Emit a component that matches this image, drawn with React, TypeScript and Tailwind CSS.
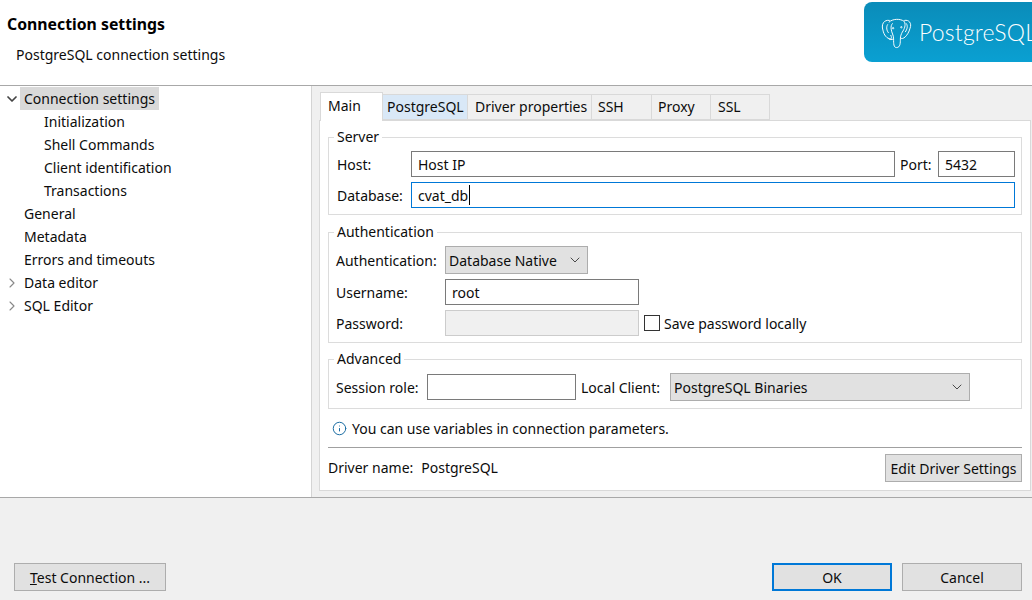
import { ChevronDown, ChevronRight, Info } from 'lucide-react';

const tabs = [
  { label: 'PostgreSQL', box: 'w-[85px] pl-[4px] bg-[#d9e8f7]' },
  { label: 'Driver properties', box: 'w-[124px] pl-[7px] bg-[#f0f0f0]' },
  { label: 'SSH', box: 'w-[60px] pl-[6px] bg-[#f0f0f0]' },
  { label: 'Proxy', box: 'w-[59px] pl-[6px] bg-[#f0f0f0]' },
  { label: 'SSL', box: 'w-[59px] pl-[7px] bg-[#f0f0f0]' },
];

function TreeRow({ label, depth = 0, arrow, selected }: { label: string; depth?: number; arrow?: 'open' | 'closed'; selected?: boolean }) {
  return (
    <div className="flex h-[23px] items-center">
      <div className="flex w-[20px] shrink-0 items-center justify-center pl-[4px]">
        {arrow === 'open' && <ChevronDown size={18} strokeWidth={2.6} className="text-[#444]" />}
        {arrow === 'closed' && <ChevronRight size={18} strokeWidth={1.6} className="text-[#888]" />}
      </div>
      <div className={`flex h-[23px] items-center pr-[4px] ${depth ? 'pl-[24px]' : 'pl-[4px]'} ${selected ? 'bg-[#d9d9d9]' : ''}`}>
        {label}
      </div>
    </div>
  );
}

function Group({ title, className, children }: { title: string; className: string; children: React.ReactNode }) {
  return (
    <fieldset className={`mx-[8px] border border-[#dcdcdc] ${className}`}>
      <legend className="ml-[5px] h-[18px] px-[3px] leading-[18px]">{title}</legend>
      {children}
    </fieldset>
  );
}

function Label({ children, className }: { children: React.ReactNode; className?: string }) {
  return <span className={`pt-[2px] ${className ?? ''}`}>{children}</span>;
}

function Field({ value, className, caret }: { value?: string; className: string; caret?: boolean }) {
  return (
    <div className={`flex h-[26px] shrink-0 items-center border pl-[6px] pt-[2px] ${className}`}>
      {value}
      {caret && <span className="mb-[2px] ml-[1px] h-[20px] w-px bg-black" />}
    </div>
  );
}

function Combo({ value, className }: { value: string; className: string }) {
  return (
    <div className={`flex h-[28px] shrink-0 items-center justify-between border border-[#adadad] bg-[#e1e1e1] pl-[3px] pr-[4px] ${className}`}>
      <Label>{value}</Label>
      <ChevronDown size={16} strokeWidth={1.2} className="text-[#222]" />
    </div>
  );
}

function Button({ children, className }: { children: React.ReactNode; className: string }) {
  return (
    <div className={`flex h-[28px] items-center justify-center bg-[#e1e1e1] pt-[2px] ${className}`}>
      <span>{children}</span>
    </div>
  );
}

function PostgresLogo() {
  return (
    <div className="flex h-[60px] w-[168px] items-center overflow-hidden rounded-l-[8px] bg-gradient-to-b from-[#0a8cb9] to-[#0aa0d2] pl-[17px] text-white">
      <svg width="31" height="32" viewBox="0 0 32 32" fill="none" stroke="white" strokeWidth="1" className="mt-[3px] shrink-0">
        <path d="M9 2C3 1 0 6 2 12C3 17 6 21 10 21C11 21 11 19 10 17" />
        <path d="M8 4C12 0 20 0 24 3C26 7 24 11 22 14C21 16 20 18 20 21C20 25 20 30 16 30C13 30 13 26 13 21C13 17 11 15 10.500 11C10 8 11 6 12 5" />
        <path d="M24 2C29 1 32 5 30 10C29 14 27 17 25 19C23 21 21 21 20 20" />
        <path d="M7 6C5 9 6 13 8 15" />
        <path d="M13 21C11 22 9 22 8 21" />
        <path d="M26 5C28 8 27 11 25 14" />
        <circle cx="12.500" cy="10" r="0.700" />
        <circle cx="21" cy="9" r="0.700" />
      </svg>
      <span className="ml-[7px] whitespace-nowrap font-['Lato',sans-serif] text-[23px] font-light tracking-[0.2px]">PostgreSQL</span>
    </div>
  );
}

export default function App() {
  return (
    <div className="flex h-[600px] w-[1032px] flex-col overflow-hidden bg-[#f0f0f0] font-['Noto_Sans',sans-serif] text-[14px] leading-[20px] text-[#0c0c0c]">
      {/* Header */}
      <div className="flex h-[86px] shrink-0 justify-between border-b border-[#a8a8a8] bg-white pt-[2px]">
        <div className="pl-[7px] pt-[12px]">
          <div className="text-[15.800px] font-bold leading-[20px] text-black">Connection settings</div>
          <div className="pl-[9px] pt-[11px]">PostgreSQL connection settings</div>
        </div>
        <PostgresLogo />
      </div>

      {/* Body */}
      <div className="flex h-[412px] shrink-0 border-b border-[#a8a8a8]">
        <div className="w-[312px] shrink-0 border-r border-[#d4d4d4] bg-white pt-px">
          <TreeRow label="Connection settings" arrow="open" selected />
          <TreeRow label="Initialization" depth={1} />
          <TreeRow label="Shell Commands" depth={1} />
          <TreeRow label="Client identification" depth={1} />
          <TreeRow label="Transactions" depth={1} />
          <TreeRow label="General" />
          <TreeRow label="Metadata" />
          <TreeRow label="Errors and timeouts" />
          <TreeRow label="Data editor" arrow="closed" />
          <TreeRow label="SQL Editor" arrow="closed" />
        </div>

        <div className="flex-1 pl-[7px] pr-[1px] pt-[6px]">
          {/* Tabs */}
          <div className="relative z-10 flex h-[28px] items-end">
            <div className="-mb-px ml-px flex h-[29px] w-[63px] items-center border border-b-0 border-[#d9d9d9] bg-white pb-[2px] pl-[7px]">Main</div>
            {tabs.map((tab) => (
              <div key={tab.label} className={`flex h-[26px] items-center border border-l-0 border-[#d9d9d9] ${tab.box}`}>
                {tab.label}
              </div>
            ))}
          </div>

          {/* Main tab */}
          <div className="h-[371px] border border-[#d9d9d9] bg-white">
            <Group title="Server" className="mt-[7px] h-[87px]">
              <div className="flex items-center pl-[8px] pt-[5px]">
                <Label className="w-[74px]">Host:</Label>
                <Field value="Host IP" className="w-[484px] border-[#7a7a7a] bg-white" />
                <Label className="ml-[5px] w-[38px]">Port:</Label>
                <Field value="5432" className="w-[77px] border-[#7a7a7a] bg-white" />
              </div>
              <div className="flex items-center pl-[8px] pt-[5px]">
                <Label className="w-[74px]">Database:</Label>
                <Field value="cvat_db" caret className="w-[604px] border-[#0078d7] bg-white" />
              </div>
            </Group>

            <Group title="Authentication" className="mt-[8px] h-[120px]">
              <div className="flex items-center pl-[7px] pt-[5px]">
                <Label className="w-[109px]">Authentication:</Label>
                <Combo value="Database Native" className="w-[143px]" />
              </div>
              <div className="flex items-center pl-[7px] pt-[5px]">
                <Label className="w-[109px]">Username:</Label>
                <Field value="root" className="w-[194px] border-[#7a7a7a] bg-white" />
              </div>
              <div className="flex items-center pl-[7px] pt-[5px]">
                <Label className="w-[109px]">Password:</Label>
                <Field className="w-[194px] border-[#cccccc] bg-[#f0f0f0]" />
                <span className="ml-[5px] h-[16px] w-[16px] border border-[#333] bg-white" />
                <Label className="ml-[4px]">Save password locally</Label>
              </div>
            </Group>

            <Group title="Advanced" className="mt-[7px] h-[59px]">
              <div className="flex items-center pl-[7px] pt-[5px]">
                <Label className="w-[91px]">Session role:</Label>
                <Field className="w-[149px] border-[#7a7a7a] bg-white" />
                <Label className="ml-[5px] w-[89px]">Local Client:</Label>
                <Combo value="PostgreSQL Binaries" className="w-[300px]" />
              </div>
            </Group>

            <div className="flex h-[38px] items-center pl-[12px]">
              <Info size={15} strokeWidth={1.6} className="text-[#1c6ea4]" />
              <Label className="ml-[5px]">You can use variables in connection parameters.</Label>
            </div>

            <div className="mx-[8px] flex h-[41px] items-center justify-between border-t border-[#a0a0a0]">
              <div className="flex">
                <span>Driver name:</span>
                <span className="ml-[8px]">PostgreSQL</span>
              </div>
              <Button className="w-[137px] border border-[#adadad]">Edit Driver Settings</Button>
            </div>
          </div>
        </div>
      </div>

      {/* Footer */}
      <div className="flex flex-1 items-end justify-between pb-[9px] pl-[14px] pr-[10px]">
        <Button className="w-[152px] border border-[#adadad]">
          <span className="underline">T</span>est Connection ...
        </Button>
        <div className="flex gap-[10px]">
          <Button className="w-[120px] border-2 border-[#0078d7]">OK</Button>
          <Button className="w-[120px] border border-[#adadad]">Cancel</Button>
        </div>
      </div>
    </div>
  );
}
